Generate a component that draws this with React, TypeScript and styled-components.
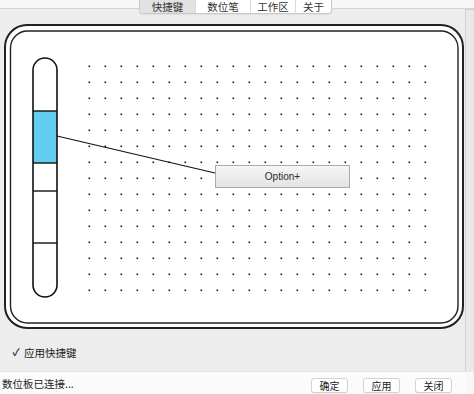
import React from "react";
import styled, { createGlobalStyle } from "styled-components";

const GlobalStyle = createGlobalStyle`
  html, body {
    margin: 0;
    padding: 0;
    background: #f6f6f6;
  }
  body {
    font-family: "Liberation Sans", "Noto Sans CJK SC", sans-serif;
    color: #2b2b2b;
  }
`;

const Window = styled.div`
  width: 474px;
  height: 394px;
  display: flex;
  flex-direction: column;
  background: #f7f7f7;
  overflow: hidden;
`;

const TabStrip = styled.div`
  width: 466px;
  height: 8px;
  display: flex;
  justify-content: center;
  padding-left: 5px;
  box-sizing: border-box;
`;

const Segmented = styled.div`
  position: relative;
  z-index: 1;
  margin-top: -6px;
  height: 20px;
  display: flex;
  background: #ffffff;
  border: 1px solid #c9c9c9;
  border-top: none;
  border-radius: 0 0 4px 4px;
  box-shadow: 0 1px 1px rgba(0, 0, 0, 0.06);
  box-sizing: border-box;
  overflow: hidden;
`;

const Tab = styled.div<{ $w: number; $active?: boolean }>`
  width: ${(p) => p.$w}px;
  padding-top: 7px;
  box-sizing: border-box;
  text-align: center;
  font-family: "Noto Sans CJK SC", sans-serif;
  font-size: 10.5px;
  line-height: 12px;
  color: #333;
  background: ${(p) => (p.$active ? "#e2e2e2" : "transparent")};
  & + & {
    border-left: 1px solid #dadada;
  }
`;

const Body = styled.div`
  display: flex;
  height: 364px;
`;

const Panel = styled.div`
  width: 466px;
  box-sizing: border-box;
  background: #ededed;
  border-top: 1px solid #d3d3d3;
  border-right: 1px solid #d0d0d0;
  border-bottom: 1px solid #e2e2e2;
  padding: 14px 0 0 3px;
  display: flex;
  flex-direction: column;
`;

const SideStrip = styled.div`
  flex: 1;
  background: #e9e9e9;
  border-top: 1px solid #d6d6d6;
  box-shadow: inset 0 25px 0 -24px #cfcfcf;
`;

const Canvas = styled.div`
  position: relative;
  width: 461px;
  height: 306px;
`;

const KeyLabel = styled.div`
  position: absolute;
  left: 212px;
  top: 142px;
  width: 135px;
  height: 23px;
  box-sizing: border-box;
  border: 1px solid #a9a9a9;
  background: linear-gradient(#f6f6f6, #e3e3e3);
  display: flex;
  align-items: center;
  justify-content: center;
  font-family: "Liberation Sans", sans-serif;
  font-size: 10px;
  color: #2a2a2a;
`;

const CheckRow = styled.label`
  margin-top: 16px;
  padding-left: 8px;
  display: flex;
  align-items: center;
  gap: 3px;
  height: 14px;
  font-family: "Noto Sans CJK SC", sans-serif;
  font-size: 10.5px;
  color: #222;
`;

const CheckMark = styled.span`
  width: 10px;
  font-size: 10px;
  line-height: 10px;
  font-weight: bold;
  color: #333;
  text-align: center;
`;

const StatusBar = styled.div`
  width: 466px;
  height: 22px;
  display: flex;
  align-items: center;
  justify-content: space-between;
  padding: 0 14px 0 2px;
  box-sizing: border-box;
  background: #fbfbfb;
`;

const StatusText = styled.span`
  font-family: "Noto Sans CJK SC", sans-serif;
  font-size: 10.5px;
  color: #222;
`;

const Buttons = styled.div`
  display: flex;
  gap: 15px;
  padding-top: 5px;
`;

const Button = styled.button`
  width: 37px;
  height: 15px;
  padding: 0;
  border: 1px solid #d2d2d2;
  border-radius: 3px;
  background: #ffffff;
  box-shadow: 0 1px 0 rgba(0, 0, 0, 0.05);
  font-family: "Noto Sans CJK SC", sans-serif;
  font-size: 10px;
  line-height: 13px;
  color: #222;
`;

const tabs = [
  { label: "快捷键", w: 55, active: true },
  { label: "数位笔", w: 55 },
  { label: "工作区", w: 45 },
  { label: "关于", w: 36 },
];

function TabletDrawing() {
  const dots: React.ReactNode[] = [];
  for (let j = 0; j < 15; j++) {
    for (let i = 0; i < 22; i++) {
      dots.push(
        <rect key={`${i}-${j}`} x={85.5 + i * 16} y={42.5 + j * 16} width={1.6} height={1.6} fill="#151515" />
      );
    }
  }
  return (
    <svg width="461" height="306" viewBox="0 0 461 306">
      <rect x="2" y="2" width="458" height="303" rx="22" fill="#ffffff" stroke="#222" strokeWidth="2" />
      <rect x="7.5" y="8" width="447.5" height="292" rx="17" fill="#ffffff" stroke="#222" strokeWidth="1.4" />
      {dots}
      <rect x="30" y="88" width="24" height="52" fill="#62ccf1" />
      <rect x="30" y="35" width="24" height="239" rx="12" fill="none" stroke="#111" strokeWidth="1.6" />
      {[88, 140, 168, 220].map((y) => (
        <line key={y} x1="30" x2="54" y1={y} y2={y} stroke="#111" strokeWidth="1.4" />
      ))}
      <line x1="54" y1="113" x2="212" y2="150" stroke="#111" strokeWidth="1.1" />
    </svg>
  );
}

export default function App() {
  return (
    <>
      <GlobalStyle />
      <Window>
        <TabStrip>
          <Segmented>
            {tabs.map((t) => (
              <Tab key={t.label} $w={t.w} $active={t.active}>
                {t.label}
              </Tab>
            ))}
          </Segmented>
        </TabStrip>
        <Body>
          <Panel>
            <Canvas>
              <TabletDrawing />
              <KeyLabel>Option+</KeyLabel>
            </Canvas>
            <CheckRow>
              <CheckMark>✓</CheckMark>
              应用快捷键
            </CheckRow>
          </Panel>
          <SideStrip />
        </Body>
        <StatusBar>
          <StatusText>数位板已连接...</StatusText>
          <Buttons>
            <Button>确定</Button>
            <Button>应用</Button>
            <Button>关闭</Button>
          </Buttons>
        </StatusBar>
      </Window>
    </>
  );
}
